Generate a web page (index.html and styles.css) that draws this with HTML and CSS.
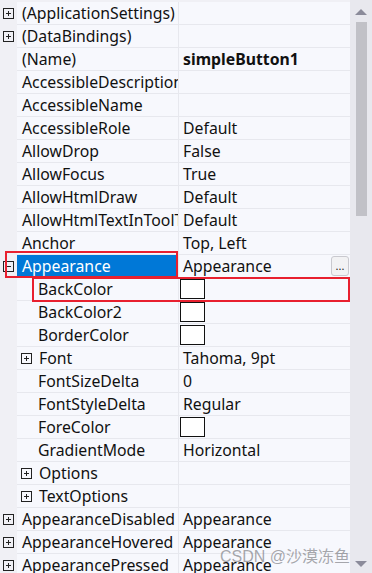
FILE: index.html
```html
<!DOCTYPE html>
<html>
<head>
<meta charset="utf-8">
<link rel="stylesheet" href="styles.css">
</head>
<body>
<div class="grid">
  <div class="list">
    <div class="row"><div class="gut"><span class="box plus"></span></div><div class="name">(ApplicationSettings)</div><div class="val"></div></div>
    <div class="row"><div class="gut"><span class="box plus"></span></div><div class="name">(DataBindings)</div><div class="val"></div></div>
    <div class="row"><div class="gut"></div><div class="name">(Name)</div><div class="val bold">simpleButton1</div></div>
    <div class="row"><div class="gut"></div><div class="name">AccessibleDescription</div><div class="val"></div></div>
    <div class="row"><div class="gut"></div><div class="name">AccessibleName</div><div class="val"></div></div>
    <div class="row"><div class="gut"></div><div class="name">AccessibleRole</div><div class="val">Default</div></div>
    <div class="row"><div class="gut"></div><div class="name">AllowDrop</div><div class="val">False</div></div>
    <div class="row"><div class="gut"></div><div class="name">AllowFocus</div><div class="val">True</div></div>
    <div class="row"><div class="gut"></div><div class="name">AllowHtmlDraw</div><div class="val">Default</div></div>
    <div class="row"><div class="gut"></div><div class="name">AllowHtmlTextInToolTip</div><div class="val">Default</div></div>
    <div class="row"><div class="gut"></div><div class="name">Anchor</div><div class="val">Top, Left</div></div>
    <div class="row"><div class="gut"><span class="box minus"></span></div><div class="name sel">Appearance</div><div class="val">Appearance<span class="dots">...</span></div></div>
    <div class="row"><div class="gut"></div><div class="name ind">BackColor</div><div class="val"><span class="sw"></span></div></div>
    <div class="row"><div class="gut"></div><div class="name ind">BackColor2</div><div class="val"><span class="sw"></span></div></div>
    <div class="row"><div class="gut"></div><div class="name ind">BorderColor</div><div class="val"><span class="sw"></span></div></div>
    <div class="row"><div class="gut"></div><div class="name sub"><span class="box plus"></span>Font</div><div class="val">Tahoma, 9pt</div></div>
    <div class="row"><div class="gut"></div><div class="name ind">FontSizeDelta</div><div class="val">0</div></div>
    <div class="row"><div class="gut"></div><div class="name ind">FontStyleDelta</div><div class="val">Regular</div></div>
    <div class="row"><div class="gut"></div><div class="name ind">ForeColor</div><div class="val"><span class="sw"></span></div></div>
    <div class="row"><div class="gut"></div><div class="name ind">GradientMode</div><div class="val">Horizontal</div></div>
    <div class="row"><div class="gut"></div><div class="name sub"><span class="box plus"></span>Options</div><div class="val"></div></div>
    <div class="row"><div class="gut"></div><div class="name sub"><span class="box plus"></span>TextOptions</div><div class="val"></div></div>
    <div class="row"><div class="gut"><span class="box plus"></span></div><div class="name">AppearanceDisabled</div><div class="val">Appearance</div></div>
    <div class="row"><div class="gut"><span class="box plus"></span></div><div class="name">AppearanceHovered</div><div class="val">Appearance</div></div>
    <div class="row"><div class="gut"><span class="box plus"></span></div><div class="name">AppearancePressed</div><div class="val">Appearance</div></div>
  </div>
  <div class="scroll">
    <span class="arrow up"></span>
    <div class="track"><div class="thumb"></div></div>
    <span class="arrow down"></span>
  </div>
  <div class="mark mark1"></div>
  <div class="mark mark2"></div>
  <div class="wm">CSDN @沙漠冻鱼</div>
</div>
</body>
</html>
```
FILE: styles.css
```css
html, body {
  margin: 0;
  padding: 0;
  background: #f0f0f5;
  overflow: hidden;
}
.grid {
  position: relative;
  display: flex;
  width: 372px;
  height: 573px;
  overflow: hidden;
  font-family: "Noto Sans", "Noto Sans CJK SC", sans-serif;
  font-size: 15.8px;
  color: #111;
}
.list {
  width: 350px;
  padding-top: 2px;
}
.row {
  display: flex;
  height: 23px;
}
.gut {
  width: 17px;
  flex: none;
  background: #f0f0f5;
  display: flex;
  align-items: center;
  padding-left: 3px;
  box-sizing: border-box;
}
.name {
  width: 162px;
  flex: none;
  box-sizing: border-box;
  padding-left: 5px;
  padding-top: 1px;
  background: #f7f8fd;
  border-bottom: 1px solid #e7e8ee;
  border-right: 1px solid #e7e8ee;
  white-space: nowrap;
  overflow: hidden;
  line-height: 21px;
  display: flex;
  align-items: center;
}
.name.ind { padding-left: 21px; }
.name.sub { padding-left: 4px; }
.name.sub .box { margin-right: 7px; }
.name.sel {
  background: #0078d7;
  color: #fff;
}
.val {
  flex: 1;
  background: #f7f8fd;
  border-bottom: 1px solid #e7e8ee;
  line-height: 21px;
  padding-left: 4px;
  padding-top: 1px;
  white-space: nowrap;
  overflow: hidden;
  display: flex;
  align-items: center;
  position: relative;
}
.bold { font-weight: bold; }
.box {
  display: inline-block;
  width: 9px;
  height: 9px;
  border: 1px solid #222;
  position: relative;
  flex: none;
}
.box::before {
  content: "";
  position: absolute;
  left: 2px;
  top: 4px;
  width: 5px;
  height: 1px;
  background: #222;
}
.box.plus::after {
  content: "";
  position: absolute;
  left: 4px;
  top: 2px;
  width: 1px;
  height: 5px;
  background: #222;
}
.sw {
  display: inline-block;
  width: 23px;
  height: 18px;
  border: 1px solid #111;
  background: #fff;
  margin-left: -3px;
  margin-top: -1px;
}
.dots {
  position: absolute;
  right: 1px;
  top: 1px;
  width: 16px;
  height: 18px;
  border: 1px solid #c9c9cf;
  border-radius: 3px;
  background: #f2f2f4;
  font-size: 11px;
  line-height: 18px;
  text-align: center;
  color: #222;
}
.scroll {
  width: 22px;
  background: #e8e8ee;
  display: flex;
  flex-direction: column;
  align-items: center;
}
.arrow {
  width: 0;
  height: 0;
  border-left: 6px solid transparent;
  border-right: 6px solid transparent;
  flex: none;
}
.arrow.up {
  border-bottom: 6px solid #8b8b9a;
  margin-top: 9px;
}
.arrow.down {
  border-top: 6px solid #8b8b9a;
  margin-bottom: 6px;
}
.track {
  flex: 1;
  width: 100%;
  display: flex;
  justify-content: center;
  padding-top: 7px;
}
.thumb {
  width: 11px;
  height: 194px;
  background: #c1c1c7;
}
.mark {
  position: absolute;
  border: 2px solid #e8202f;
  box-sizing: border-box;
}
.mark1 { left: 5px; top: 251px; width: 173px; height: 27px; }
.mark2 { left: 32px; top: 277px; width: 318px; height: 25px; }
.wm {
  position: absolute;
  left: 220px;
  top: 543px;
  font-family: "Liberation Sans", "Noto Sans CJK SC", sans-serif;
  font-size: 16px;
  color: rgba(110, 110, 115, 0.6);
  white-space: nowrap;
}
```
